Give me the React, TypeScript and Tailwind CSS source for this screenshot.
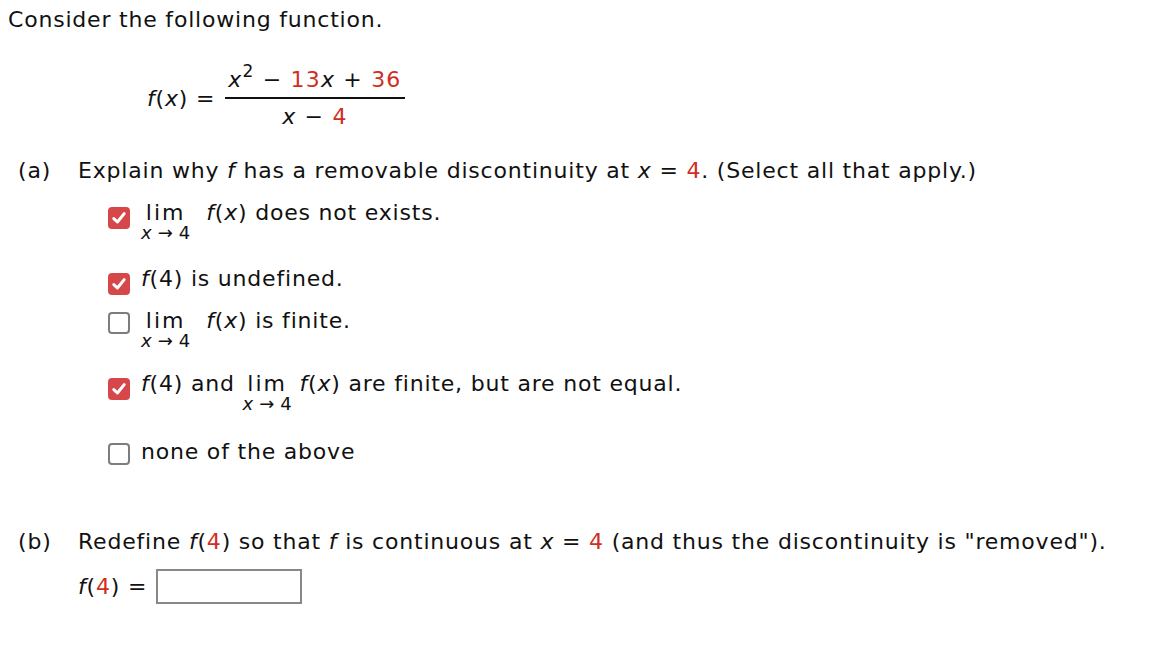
import React from "react";

const RED = "text-[#cf2f1f]";

function Box({ checked }: { checked: boolean }) {
  if (checked) {
    return (
      <span className="inline-flex w-[22px] h-[22px] rounded-[4px] bg-[#d6474a] items-center justify-center shrink-0">
        <svg width="16" height="16" viewBox="0 0 16 16">
          <path d="M2.8 8.6 L6.4 12 L13.2 3.6" fill="none" stroke="#fff" strokeWidth="3" strokeLinecap="round" strokeLinejoin="round" />
        </svg>
      </span>
    );
  }
  return <span className="inline-block w-[22px] h-[22px] rounded-[4px] border-2 border-[#7d7d7d] bg-white shrink-0" />;
}

function Lim() {
  return (
    <span className="inline-flex flex-col items-center align-baseline">
      <span className="tracking-[2px]">lim</span>
      <span className="text-[18px] leading-[18px] -mt-[4px] whitespace-nowrap tracking-normal">
        <i>x</i>
        <span className="mx-[6px]">→</span>4
      </span>
    </span>
  );
}

function Option({ checked, children, mt }: { checked: boolean; children: React.ReactNode; mt: string }) {
  return (
    <div className={`flex items-start gap-[11px] ${mt}`}>
      <span className="mt-[6px]">
        <Box checked={checked} />
      </span>
      <div className="leading-[30px]">{children}</div>
    </div>
  );
}

export default function App() {
  return (
    <div
      className="w-[1162px] h-[650px] bg-white text-[#111] text-[22px] leading-[30px] tracking-[0.8px] pl-[8px] pt-[5px]"
      style={{ fontFamily: "'DejaVu Sans', Verdana, sans-serif" }}
    >
      <p>Consider the following function.</p>

      {/* the function */}
      <div className="flex items-center ml-[139px] mt-[30px]">
        <span>
          <i>f</i>(<i>x</i>) ={" "}
        </span>
        <span className="inline-flex flex-col items-center ml-[10px]">
          <span className="px-[3px] tracking-[1.2px]">
            <i>x</i>
            <sup className="text-[17px] relative -top-[10px]">2</sup> − <span className={RED}>13</span>
            <i>x</i> + <span className={RED}>36</span>
          </span>
          <span className="w-full h-[2px] bg-[#111] mt-[2px]" />
          <span className="mt-[3px] tracking-[1.2px]">
            <i>x</i> − <span className={RED}>4</span>
          </span>
        </span>
      </div>

      {/* part (a) */}
      <div className="flex mt-[24px] ml-[10px]">
        <span className="w-[60px]">(a)</span>
        <span>
          Explain why <i>f</i> has a removable discontinuity at <i>x</i> = <span className={RED}>4</span>. (Select all that
          apply.)
        </span>
      </div>

      <div className="ml-[100px]">
        <Option checked mt="mt-[12px]">
          <Lim />
          <span className="ml-[16px]">
            <i>f</i>(<i>x</i>) does not exists.
          </span>
        </Option>
        <Option checked mt="mt-[22px]">
          <i>f</i>(4) is undefined.
        </Option>
        <Option checked={false} mt="mt-[6px]">
          <Lim />
          <span className="ml-[16px]">
            <i>f</i>(<i>x</i>) is finite.
          </span>
        </Option>
        <Option checked mt="mt-[19px]">
          <i>f</i>(4) and <Lim /> <i>f</i>(<i>x</i>) are finite, but are not equal.
        </Option>
        <Option checked={false} mt="mt-[24px]">
          none of the above
        </Option>
      </div>

      {/* part (b) */}
      <div className="flex mt-[54px] ml-[10px]">
        <span className="w-[60px]">(b)</span>
        <span>
          Redefine <i>f</i>(<span className={RED}>4</span>) so that <i>f</i> is continuous at <i>x</i> ={" "}
          <span className={RED}>4</span> (and thus the discontinuity is "removed").
        </span>
      </div>
      <div className="flex items-center ml-[70px] mt-[12px]">
        <span>
          <i>f</i>(<span className={RED}>4</span>) =
        </span>
        <span className="inline-block ml-[9px] w-[146px] h-[35px] border-2 border-[#888] bg-white" />
      </div>
    </div>
  );
}
